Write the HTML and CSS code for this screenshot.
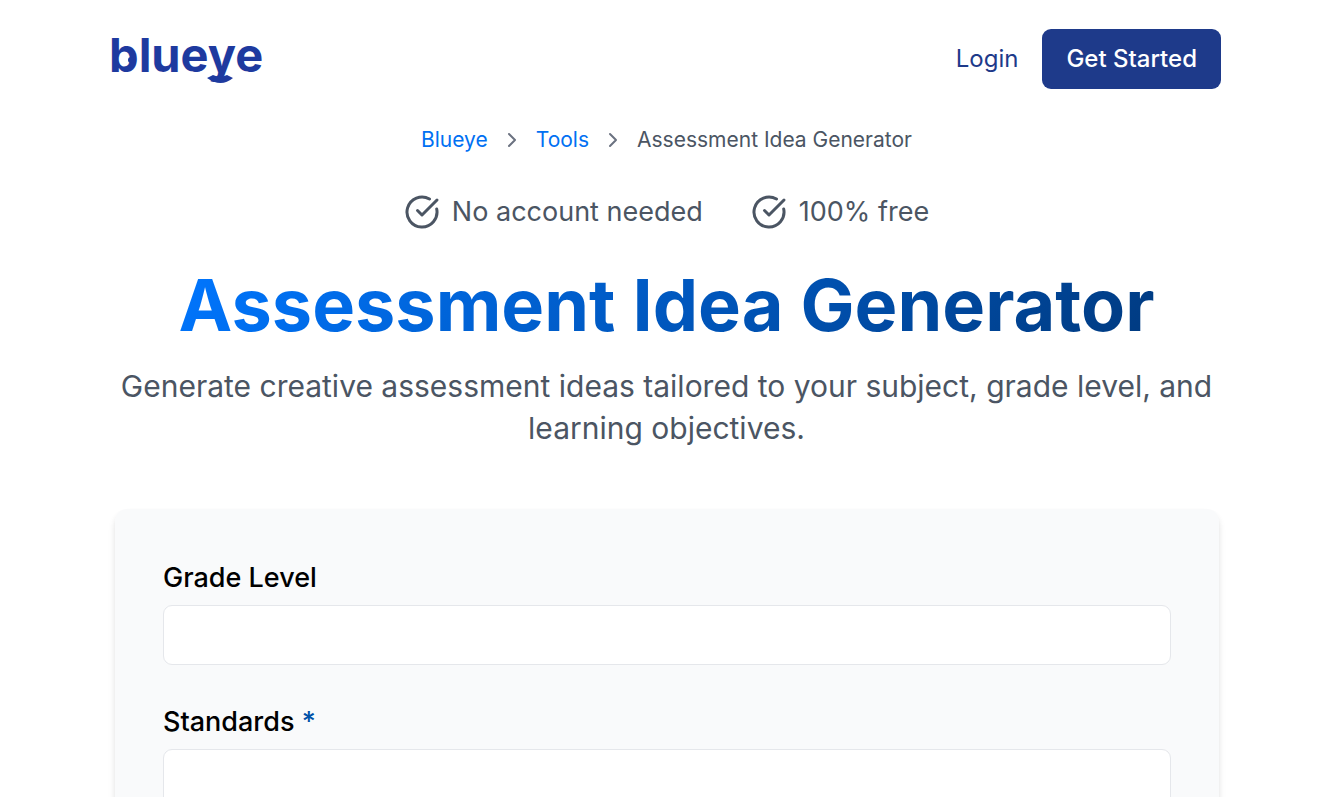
FILE: index.html
```html
<!DOCTYPE html>
<html lang="en">
<head>
    <meta charset="UTF-8">
    <meta name="viewport" content="width=device-width, initial-scale=1.0">
    <title>Assessment Idea Generator</title>
    <link rel="stylesheet" href="styles.css">
</head>
<body>
    <header class="header">
        <a class="logo" href="#">
            <svg viewBox="0 0 150 48" fill="currentColor">
                <text x="-3" y="37">blueye</text>
                <circle cx="19" cy="25" r="3"/>
                <path d="M95 43l6-3q7 3 14 0l6 3q-12 10-26 0z"/>
            </svg>
        </a>
        <nav class="nav">
            <a class="login" href="#">Login</a>
            <button class="get-started" type="button">Get Started</button>
        </nav>
    </header>

    <main class="main">
        <nav class="breadcrumb" aria-label="Breadcrumb">
            <a href="#">Blueye</a>
            <svg class="chevron" viewBox="0 0 24 24" aria-hidden="true"><path d="M9 6l6 6-6 6"/></svg>
            <a href="#">Tools</a>
            <svg class="chevron" viewBox="0 0 24 24" aria-hidden="true"><path d="M9 6l6 6-6 6"/></svg>
            <span>Assessment Idea Generator</span>
        </nav>

        <div class="perks">
            <div class="perk">
                <svg class="check" viewBox="0 0 24 24" aria-hidden="true"><path d="M21.8 10A10 10 0 1 1 17 3.34"/><path d="M9 11l3 3L22 4"/></svg>
                No account needed
            </div>
            <div class="perk">
                <svg class="check" viewBox="0 0 24 24" aria-hidden="true"><path d="M21.8 10A10 10 0 1 1 17 3.34"/><path d="M9 11l3 3L22 4"/></svg>
                100% free
            </div>
        </div>

        <h1>Assessment Idea Generator</h1>
        <p class="subtitle">Generate creative assessment ideas tailored to your subject, grade level, and learning objectives.</p>

        <form class="card">
            <div class="field">
                <label for="grade">Grade Level</label>
                <input id="grade" type="text">
            </div>
            <div class="field">
                <label for="standards">Standards <span class="required">*</span></label>
                <textarea id="standards" rows="4" required></textarea>
            </div>
        </form>
    </main>
</body>
</html>
```
FILE: styles.css
```css
* {
    box-sizing: border-box;
}
body {
    margin: 0;
    padding: 0 108px 0 112px;
    font-family: Inter, "Liberation Sans", sans-serif;
    font-size: 24px;
    line-height: 36px;
    color: #4b5563;
    background-color: #fff;
    overflow-x: hidden;
}
a {
    text-decoration: none;
}
.header {
    display: flex;
    justify-content: space-between;
    align-items: center;
    padding: 29px 0;
}
.logo {
    color: #1e3a9f;
}
.logo svg {
    display: block;
    width: 150px;
    height: 48px;
    overflow: visible;
    font-size: 47px;
    font-weight: 700;
}
.nav {
    display: flex;
    align-items: center;
    gap: 24px;
}
.login {
    color: #1e3a8a;
}
.get-started {
    height: 60px;
    padding: 0 24px;
    border: none;
    border-radius: 9px;
    background-color: #1e3a8a;
    color: #fff;
    font: inherit;
    font-weight: 500;
    cursor: pointer;
}
.breadcrumb {
    display: flex;
    justify-content: center;
    align-items: center;
    gap: 12px;
    padding-top: 7px;
    font-size: 21px;
    line-height: 30px;
}
.breadcrumb a {
    color: #0070f3;
}
.chevron {
    width: 24px;
    height: 24px;
    fill: none;
    stroke: #6b7280;
    stroke-width: 2;
    stroke-linecap: round;
    stroke-linejoin: round;
}
.perks {
    display: flex;
    justify-content: center;
    gap: 48px;
    margin-top: 36px;
    font-size: 27px;
    line-height: 42px;
}
.perk {
    display: flex;
    align-items: center;
    gap: 12px;
}
.check {
    width: 36px;
    height: 36px;
    fill: none;
    stroke: #4b5563;
    stroke-width: 2;
    stroke-linecap: round;
    stroke-linejoin: round;
}
h1 {
    width: fit-content;
    margin: 36px auto 24px;
    font-size: 72px;
    line-height: 72px;
    font-weight: 700;
    text-align: center;
    color: transparent;
    background: linear-gradient(135deg, #0076ff, #003a80);
    background-clip: text;
}
.subtitle {
    margin: 0 0 60px;
    font-size: 30px;
    line-height: 42px;
    text-align: center;
}
.card {
    margin: 0 2px 0 3px;
    padding: 48px;
    border-radius: 12px;
    background-color: #f9fafb;
    box-shadow: 0 6px 9px -1px rgba(0, 0, 0, 0.1), 0 3px 6px -2px rgba(0, 0, 0, 0.1);
}
.field {
    margin-bottom: 36px;
}
label {
    display: block;
    margin-bottom: 6px;
    font-size: 27px;
    line-height: 42px;
    font-weight: 500;
    color: #000;
}
.required {
    color: #0051a8;
}
input, textarea {
    display: block;
    width: 100%;
    height: 60px;
    padding: 12px 18px;
    border: 1px solid #e5e7eb;
    border-radius: 9px;
    background-color: #fff;
    font: inherit;
}
textarea {
    height: 150px;
}
```
